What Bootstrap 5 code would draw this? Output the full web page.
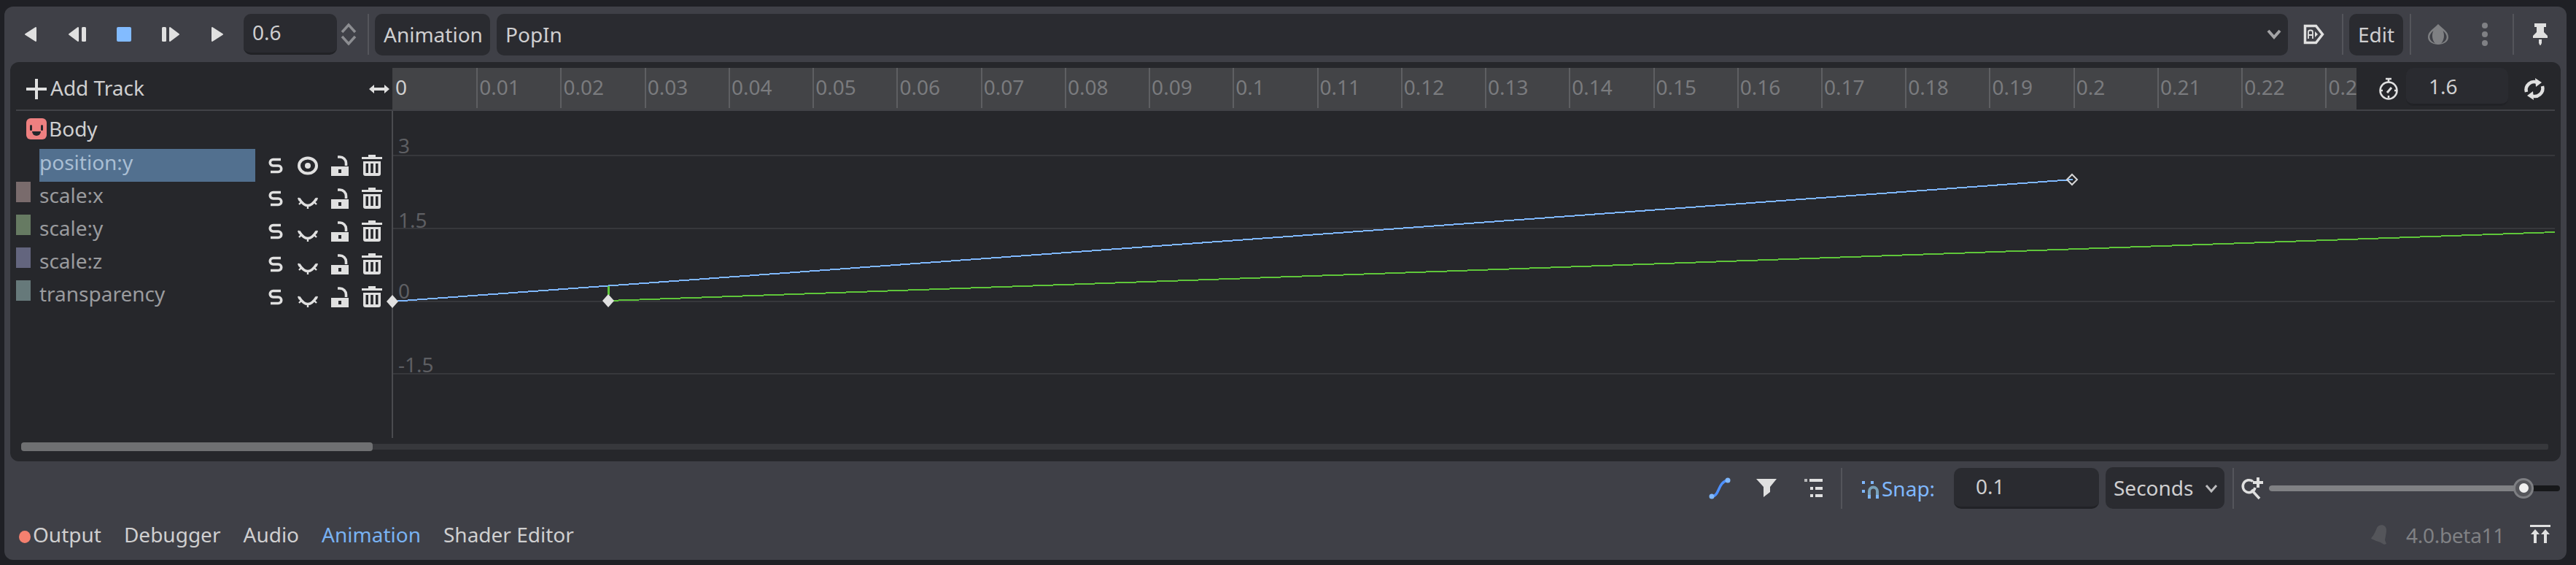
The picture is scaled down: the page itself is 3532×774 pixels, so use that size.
<!DOCTYPE html>
<html lang="en">
<head>
<meta charset="UTF-8">
<title>Animation panel</title>
<link href="https://cdn.jsdelivr.net/npm/bootstrap@5.3.0/dist/css/bootstrap.min.css" rel="stylesheet">
<style>
    :root {
        --page-bg: #1f2025;
        --dock-bg: #3f4047;
        --inner-bg: #26272b;
        --field-bg: #2a2b30;
        --field-edge: #212226;
        --icon: #e0e0e0;
        --txt: #cfcfd0;
        --blue: #7fb8ff;
    }
    html, body { height: 100%; }
    body {
        margin: 0;
        background: var(--page-bg);
        color: var(--txt);
        font-family: "Noto Sans", sans-serif;
        font-size: 28px;
        line-height: 38px;
        overflow: hidden;
    }
    .shell { padding: 9px 13px 7px 6px; height: 774px; }
    .dock { background: var(--dock-bg); height: 758px; border-radius: 12px; }
    .topbar { height: 76px; padding: 0 4px; }
    .ibox { width: 64px; height: 32px; flex: none; display: flex; align-items: center; justify-content: center; }
    .ibox svg, .tool svg, .stop-w svg { display: block; }
    .vsep { width: 2px; height: 56px; background: #54555b; flex: none; }
    .gd-field {
        background: var(--field-bg);
        color: var(--txt);
        border: 0;
        border-bottom: 3px solid var(--field-edge);
        border-radius: 10px;
        height: 56px;
        padding: 0 0 0 12px;
        font-size: 28px;
        line-height: 50px;
        flex: none;
    }
    .gd-btn {
        background: var(--field-bg);
        color: var(--txt);
        border: 0;
        border-radius: 10px;
        height: 57px;
        padding: 0 12px;
        font-size: 28px;
        line-height: 55px;
        text-align: left;
        flex: none;
    }
    .gd-btn:hover { background: var(--field-bg); color: var(--txt); }
    .anim-pick { flex: 1 1 0; min-width: 0; }
    .inner {
        background: var(--inner-bg);
        margin: 0 8px;
        height: 547px;
        border-radius: 12px;
        padding-top: 8px;
    }
    .head-row { height: 59px; margin: 0 8px; border-bottom: 2px solid #414247; }
    .head-left { width: 516px; flex: none; padding-left: 14px; height: 57px; }
    .add-track { color: var(--txt); margin: -3px 0 0 5px; }
    .ruler { flex: 1 1 0; min-width: 0; height: 57px; background: #434447; overflow: hidden; }
    .rtick {
        width: 115.24px;
        flex: none;
        height: 55px;
        border-left: 2px solid #5e5f62;
        padding-left: 2px;
        color: #7a7b7e;
        line-height: 52px;
    }
    .rtick:first-child { border-left: 0; padding-left: 4px; color: #d0d0d0; }
    .head-right { width: 272px; flex: none; height: 57px; }
    .len-field { width: 140px; height: 52px; line-height: 51px; padding-left: 31px; margin: 0 20px 5px 8px; }
    .stop-w { margin-left: 28px; width: 32px; height: 32px; flex: none; }
    .graph-wrap { height: 448px; margin-left: 8px; }
    .tracks { width: 516px; flex: none; }
    .obj-row { height: 52px; padding: 8px 0 0 14px; }
    .obj-icon { margin-top: 2px; flex: none; }
    .obj-name { margin: -3px 0 0 3px; }
    .trk-row { height: 45px; }
    .swatch { width: 20px; height: 28px; flex: none; margin-right: 12px; align-self: flex-start; }
    .trk-name { width: 296px; height: 45px; flex: none; color: #9a9b9e; line-height: 36px; white-space: nowrap; }
    .trk-name.picked { background: #52708f; color: #a9bed3; }
    .trk-tools { margin-left: 6px; }
    .tool { width: 44px; height: 45px; flex: none; display: flex; align-items: center; justify-content: center; }
    .canvas { flex: 1 1 0; position: relative; }
    .canvas svg { position: absolute; left: 0; top: 0; overflow: visible; }
    .val-lbl { position: absolute; left: 8px; color: #5e5f63; }
    .hbar { height: 12px; margin: 6px 17px 0 15px; position: relative; }
    .hbar-track { position: absolute; left: 0; right: 0; top: 2px; height: 8px; background: #37383c; border-radius: 2px; }
    .hbar-thumb { position: absolute; left: 0; top: 0; width: 482px; height: 12px; background: #6f7072; border-radius: 4px; }
    .lowbar { height: 57px; margin-top: 8px; }
    .snap-lbl { color: var(--blue); width: 99px; flex: none; margin-left: 0; padding-right: 0; }
    .snap-field { width: 199px; padding-left: 30px; }
    .unit-btn { width: 163px; margin-left: 9px; padding: 0 0 0 11px; position: relative; }
    .unit-btn svg { position: absolute; right: 9px; top: 23px; }
    .zoom-sl { width: 399px; margin-right: 9px; position: relative; flex: none; }
    .zoom-sl .progress { height: 8px; background: #17181a; border-radius: 4px; }
    .zoom-sl .progress-bar { background: #808184; }
    .zoom-grab {
        position: absolute; left: 335px; top: -10px; width: 28px; height: 28px;
        border: 3px solid #7e7f83; border-radius: 50%; background: #55565b;
        display: flex; align-items: center; justify-content: center;
    }
    .zoom-grab::after { content: ""; width: 13px; height: 13px; border-radius: 50%; background: #f0f0f0; }
    .statusbar { height: 70px; padding: 0 21px 0 20px; }
    .statusbar .nav { gap: 31px; flex-wrap: nowrap; }
    .statusbar .nav-link { padding: 0; color: var(--txt); line-height: 72px; }
    .statusbar .nav-link.active { color: #79b2f2; }
    .err-dot { display: inline-block; width: 16px; height: 17px; background: #f4806f; border-radius: 50%; margin-right: 3px; vertical-align: -1px; }
    .ver-txt { color: #808184; margin: 2px 34px 0 25px; letter-spacing: -.3px; }
</style>
</head>
<body>
<svg width="0" height="0" class="position-absolute">
    <defs>
        <symbol id="i-solo" viewBox="0 0 32 32"><path d="M23 7.500H12.500a4.250 4.250 0 0 0 0 8.500h7a4.250 4.250 0 0 1 0 8.500H9" fill="none" stroke="#e0e0e0" stroke-width="3.600"/></symbol>
        <symbol id="i-eye" viewBox="0 0 32 32"><ellipse cx="16" cy="16" rx="12" ry="10.500" fill="none" stroke="#e0e0e0" stroke-width="4"/><circle cx="16" cy="16" r="4" fill="#e0e0e0"/></symbol>
        <symbol id="i-shut" viewBox="0 0 32 32"><path d="M4 16Q16 35 28 16" fill="none" stroke="#e0e0e0" stroke-width="3.400"/><path d="M7 21l-3 3M25 21l3 3M16 25v5M3 15l2 4M29 15l-2 4" stroke="#e0e0e0" stroke-width="2.400"/></symbol>
        <symbol id="i-lock" viewBox="0 0 32 32"><path d="M13 4h3a8.500 8.500 0 0 1 8.500 8.500V16" fill="none" stroke="#e0e0e0" stroke-width="3.600"/><path d="M4 17h24v13H4z" fill="#e0e0e0"/><rect x="14" y="21" width="4" height="5" fill="#26272b"/></symbol>
        <symbol id="i-trash" viewBox="0 0 32 32"><path d="M11 1h10v3h9v3H2V4h9z" fill="#e0e0e0"/><path d="M4 10h24v17a3 3 0 0 1-3 3H7a3 3 0 0 1-3-3z" fill="#e0e0e0"/><path d="M7.500 13h3.500v13H7.500zM14.200 13h3.600v13h-3.600zM21 13h3.500v13H21z" fill="#26272b"/></symbol>
    </defs>
</svg>

<div class="shell">
    <div class="dock d-flex flex-column">
        <div class="topbar d-flex align-items-center">
            <div class="ibox"><svg width="32" height="32"><polygon points="23,7 23,25 9,16" fill="#e0e0e0" stroke="#e0e0e0" stroke-width="2" stroke-linejoin="round"/></svg></div>
            <div class="ibox"><svg width="32" height="32"><polygon points="17,7 17,25 5,16" fill="#e0e0e0" stroke="#e0e0e0" stroke-width="2" stroke-linejoin="round"/><rect x="22" y="6" width="6" height="20" rx="1.500" fill="#e0e0e0"/></svg></div>
            <div class="ibox"><svg width="32" height="32"><rect x="6" y="6" width="20" height="20" rx="2" fill="#82bbff"/></svg></div>
            <div class="ibox"><svg width="32" height="32"><rect x="4" y="6" width="6" height="20" rx="1.500" fill="#e0e0e0"/><polygon points="15,7 15,25 27,16" fill="#e0e0e0" stroke="#e0e0e0" stroke-width="2" stroke-linejoin="round"/></svg></div>
            <div class="ibox"><svg width="32" height="32"><polygon points="9,7 9,25 23,16" fill="#e0e0e0" stroke="#e0e0e0" stroke-width="2" stroke-linejoin="round"/></svg></div>
            <div class="form-control gd-field ms-1" style="width:128px">0.6</div>
            <div class="ibox" style="width:32px;height:40px"><svg width="32" height="40"><path d="M7 17l9-10 9 10" fill="none" stroke="#8c8d91" stroke-width="3.500"/><path d="M7 23l9 10 9-10" fill="none" stroke="#8c8d91" stroke-width="3.500"/></svg></div>
            <div class="vsep" style="margin:0 8px 0 10px"></div>
            <button class="btn gd-btn" style="width:158px">Animation</button>
            <button class="btn gd-btn anim-pick position-relative" style="margin-left:9px">PopIn
                <svg class="position-absolute" style="right:9px;top:20px" width="20" height="16"><path d="M2 3l8 9 8-9" fill="none" stroke="#a4a4a6" stroke-width="4"/></svg>
            </button>
            <div class="ibox ms-1"><svg width="32" height="32"><path d="M3.500 4.500h15l9 11.500-9 11.500h-15z" fill="none" stroke="#e0e0e0" stroke-width="3.500"/><path d="M8 22v-9a2.500 2.500 0 0 1 2.500-2.500h1a2.500 2.500 0 0 1 2.500 2.500v9M8 17h6" fill="none" stroke="#e0e0e0" stroke-width="1.800"/><path d="M17 12l4 4-4 4z" fill="#e0e0e0"/></svg></div>
            <div class="vsep" style="margin-left:6px"></div>
            <button class="btn gd-btn" style="width:74px;margin-left:8px">Edit</button>
            <div class="vsep" style="margin-left:9px"></div>
            <div class="ibox" style="margin-left:5px"><svg width="32" height="32"><path d="M16 2C9 9 2 12 2 20a13 10 0 0 0 14 10 13 10 0 0 0 14-10C30 12 23 9 16 2z" fill="#7f8083"/><path d="M9.500 11C5 15 4 18 4.500 21s3 6 7.500 7.500C7.500 24 7 16 9.500 11zM22.500 11c4.500 4 5.500 7 5 10s-3 6-7.500 7.500c4.500-4.500 5-12.500 2.500-17.500z" fill="#3f4047"/></svg></div>
            <div class="ibox"><svg width="32" height="32" style="overflow:visible"><circle cx="16" cy="4" r="4" fill="#808185"/><circle cx="16" cy="16" r="4" fill="#808185"/><circle cx="16" cy="28" r="4" fill="#808185"/></svg></div>
            <div class="vsep" style="margin-left:6px"></div>
            <div class="ibox ms-1"><svg width="32" height="32"><path d="M8 1h16v5h-3v7l5 5v3H6v-3l5-5V6H8z" fill="#e0e0e0"/><path d="M14 23h4v5l-1.500 3h-1L14 28z" fill="#e0e0e0"/></svg></div>
        </div>

        <div class="inner">
            <div class="head-row d-flex">
                <div class="head-left d-flex align-items-center">
                    <svg width="28" height="28"><path d="M12 0h4v12h12v4H16v12h-4V16H0v-4h12z" fill="#e0e0e0"/></svg>
                    <span class="add-track">Add Track</span>
                    <svg class="ms-auto me-1" width="28" height="16"><path d="M0 8l7-6v4h14V2l7 6-7 6v-4H7v4z" fill="#e0e0e0"/></svg>
                </div>
                <div class="ruler d-flex" id="ruler"></div>
                <div class="head-right d-flex align-items-center">
                    <div class="stop-w"><svg width="32" height="32"><circle cx="16" cy="18" r="11.500" fill="none" stroke="#e0e0e0" stroke-width="2.500"/><path d="M12 2h8M16 2v5M16 28v-3M5 18h3M27 18h-3" stroke="#e0e0e0" stroke-width="2.500"/><path d="M14 21l6-7" stroke="#e0e0e0" stroke-width="3"/></svg></div>
                    <div class="form-control gd-field len-field">1.6</div>
                    <svg width="32" height="32"><path d="M5 20a11 11 0 0 1 15-13" fill="none" stroke="#e0e0e0" stroke-width="4.500"/><path d="M17 1l9 6-8 6z" fill="#e0e0e0"/><path d="M27 12a11 11 0 0 1-15 13" fill="none" stroke="#e0e0e0" stroke-width="4.500"/><path d="M15 31l-9-6 8-6z" fill="#e0e0e0"/></svg>
                </div>
            </div>

            <div class="graph-wrap d-flex">
                <div class="tracks">
                    <div class="obj-row d-flex align-items-start">
                        <svg class="obj-icon" width="28" height="30"><rect width="28" height="29" rx="6" fill="#ee8080"/><rect x="5" y="9" width="3" height="8" rx="1.500" fill="#26272b"/><rect x="20" y="9" width="3" height="8" rx="1.500" fill="#26272b"/><path d="M8 18a6 6 0 0 0 12 0z" fill="#26272b"/></svg>
                        <span class="obj-name">Body</span>
                    </div>
                    <div id="trackList"></div>
                </div>
                <div class="canvas">
                    <svg width="2965" height="448">
                        <g fill="#37383c">
                            <rect y="60" width="2965" height="2"/>
                            <rect y="160" width="2965" height="2"/>
                            <rect y="260" width="2965" height="2"/>
                            <rect y="359" width="2965" height="2"/>
                        </g>
                        <rect x="-1" y="0" width="2" height="448" fill="#4a4b4f"/>
                        <path d="M0 261L2304 94" stroke="#7fb8ff" stroke-width="2" fill="none" shape-rendering="crispEdges"/>
                        <path d="M296 260L2965 166" stroke="#5fc63a" stroke-width="2" fill="none" shape-rendering="crispEdges"/>
                        <rect x="295" y="240" width="3" height="12" fill="#5fc63a"/>
                        <path d="M0 252l8 9-8 9-8-9z" fill="#e0e0e0"/>
                        <path d="M296 251l8 9-8 9-8-9z" fill="#e0e0e0"/>
                        <path d="M2303 87l7 7-7 7-7-7z" fill="none" stroke="#d8d8d8" stroke-width="2"/>
                    </svg>
                    <div class="val-lbl" style="top:28px">3</div>
                    <div class="val-lbl" style="top:130px">1.5</div>
                    <div class="val-lbl" style="top:227px">0</div>
                    <div class="val-lbl" style="top:328px">-1.5</div>
                </div>
            </div>

            <div class="hbar">
                <div class="hbar-track"></div>
                <div class="hbar-thumb"></div>
            </div>
        </div>

        <div class="lowbar d-flex align-items-center justify-content-end">
            <div class="ibox"><svg width="32" height="32"><path d="M5 27C16 27 13 7 27 5" fill="none" stroke="#4d90ff" stroke-width="3.500"/><circle cx="27" cy="5" r="3.500" fill="#7fb8ff"/><circle cx="5" cy="27" r="3.500" fill="#7fb8ff"/></svg></div>
            <div class="ibox"><svg width="32" height="32"><polygon points="2,3 30,3 21,14 21,21 12,28 12,14" fill="#e0e0e0"/></svg></div>
            <div class="ibox"><svg width="32" height="32" fill="#e0e0e0"><rect x="4" y="3" width="4" height="4" fill="#b8b9bb"/><rect x="11" y="3" width="18" height="4"/><rect x="12" y="14" width="4" height="4"/><rect x="19" y="14" width="10" height="4"/><rect x="12" y="24" width="4" height="4"/><rect x="19" y="24" width="10" height="4"/></svg></div>
            <div class="vsep" style="margin:0 24px 0 6px"></div>
            <div class="flex-shrink-0" style="width:30px;height:32px"><svg class="d-block" width="30" height="32"><g fill="#7fb8ff"><rect x="3" y="6" width="4" height="4"/><rect x="15" y="6" width="4" height="4"/><rect x="3" y="18" width="4" height="4"/></g><path d="M13 25v-5a5.500 5.500 0 0 1 11 0v5" fill="none" stroke="#78a0b8" stroke-width="4"/><rect x="11" y="25" width="4" height="5" fill="#7fb8ff"/><rect x="22" y="25" width="4" height="5" fill="#7fb8ff"/></svg></div>
            <div class="snap-lbl">Snap:</div>
            <div class="form-control gd-field snap-field">0.1</div>
            <button class="btn gd-btn unit-btn">Seconds
                <svg width="18" height="13"><path d="M2 2l7 8 7-8" fill="none" stroke="#bcbcbe" stroke-width="3"/></svg>
            </button>
            <div class="vsep" style="margin-left:11px"></div>
            <div class="ibox" style="width:48px"><svg width="32" height="32"><path d="M18 6.500A8.500 8.500 0 1 0 21 15" fill="none" stroke="#e0e0e0" stroke-width="3.500"/><path d="M16 18l11 12" stroke="#e0e0e0" stroke-width="3.500"/><path d="M23 1h4v5h5v4h-5v5h-4v-5h-5V6h5z" fill="#e0e0e0"/></svg></div>
            <div class="zoom-sl">
                <div class="progress"><div class="progress-bar" style="width:87.5%"></div></div>
                <div class="zoom-grab"></div>
            </div>
        </div>

        <div class="statusbar d-flex align-items-center">
            <ul class="nav">
                <li class="nav-item"><a class="nav-link" href="#"><span class="err-dot"></span>Output</a></li>
                <li class="nav-item"><a class="nav-link" href="#">Debugger</a></li>
                <li class="nav-item"><a class="nav-link" href="#">Audio</a></li>
                <li class="nav-item"><a class="nav-link active" href="#">Animation</a></li>
                <li class="nav-item"><a class="nav-link" href="#">Shader Editor</a></li>
            </ul>
            <div class="ms-auto d-flex align-items-center">
                <svg width="26" height="28"><path d="M4 18c3-3 5-8 7-13 2-4 8-5 11-2 3 3 2 8 1 13l-1 6 2 5-3 1-5-3c-4-1-8-3-13-5z" fill="#54555a"/></svg>
                <span class="ver-txt">4.0.beta11</span>
                <svg width="30" height="26"><rect x="1" y="0" width="28" height="3" fill="#e0e0e0"/><path d="M8 6l6 7h-4v12H6V13H2z" fill="#e0e0e0"/><path d="M22 6l6 7h-4v12h-4V13h-4z" fill="#e0e0e0"/></svg>
            </div>
        </div>
    </div>
</div>

<script>
    const ruler = document.getElementById('ruler');
    for (let i = 0; i < 24; i++) {
        const tick = document.createElement('div');
        tick.className = 'rtick';
        tick.textContent = i === 23 ? '0.2' : String(parseFloat((i / 100).toFixed(2)));
        ruler.appendChild(tick);
    }

    // track rows
    const tracks = [
        { name: 'position:y', color: null, picked: true, eye: 'i-eye' },
        { name: 'scale:x', color: '#796b6c', eye: 'i-shut' },
        { name: 'scale:y', color: '#667a62', eye: 'i-shut' },
        { name: 'scale:z', color: '#63657e', eye: 'i-shut' },
        { name: 'transparency', color: '#66797a', eye: 'i-shut' }
    ];
    const list = document.getElementById('trackList');
    tracks.forEach(t => {
        const icon = id => `<div class="tool"><svg width="32" height="32"><use href="#${id}"/></svg></div>`;
        list.innerHTML += `
            <div class="trk-row d-flex">
                <div class="swatch" style="background:${t.color || 'transparent'}"></div>
                <div class="trk-name ${t.picked ? 'picked' : ''}">${t.name}</div>
                <div class="trk-tools d-flex">${icon('i-solo')}${icon(t.eye)}${icon('i-lock')}${icon('i-trash')}</div>
            </div>`;
    });
</script>
<script src="https://cdn.jsdelivr.net/npm/bootstrap@5.3.0/dist/js/bootstrap.bundle.min.js"></script>
</body>
</html>
